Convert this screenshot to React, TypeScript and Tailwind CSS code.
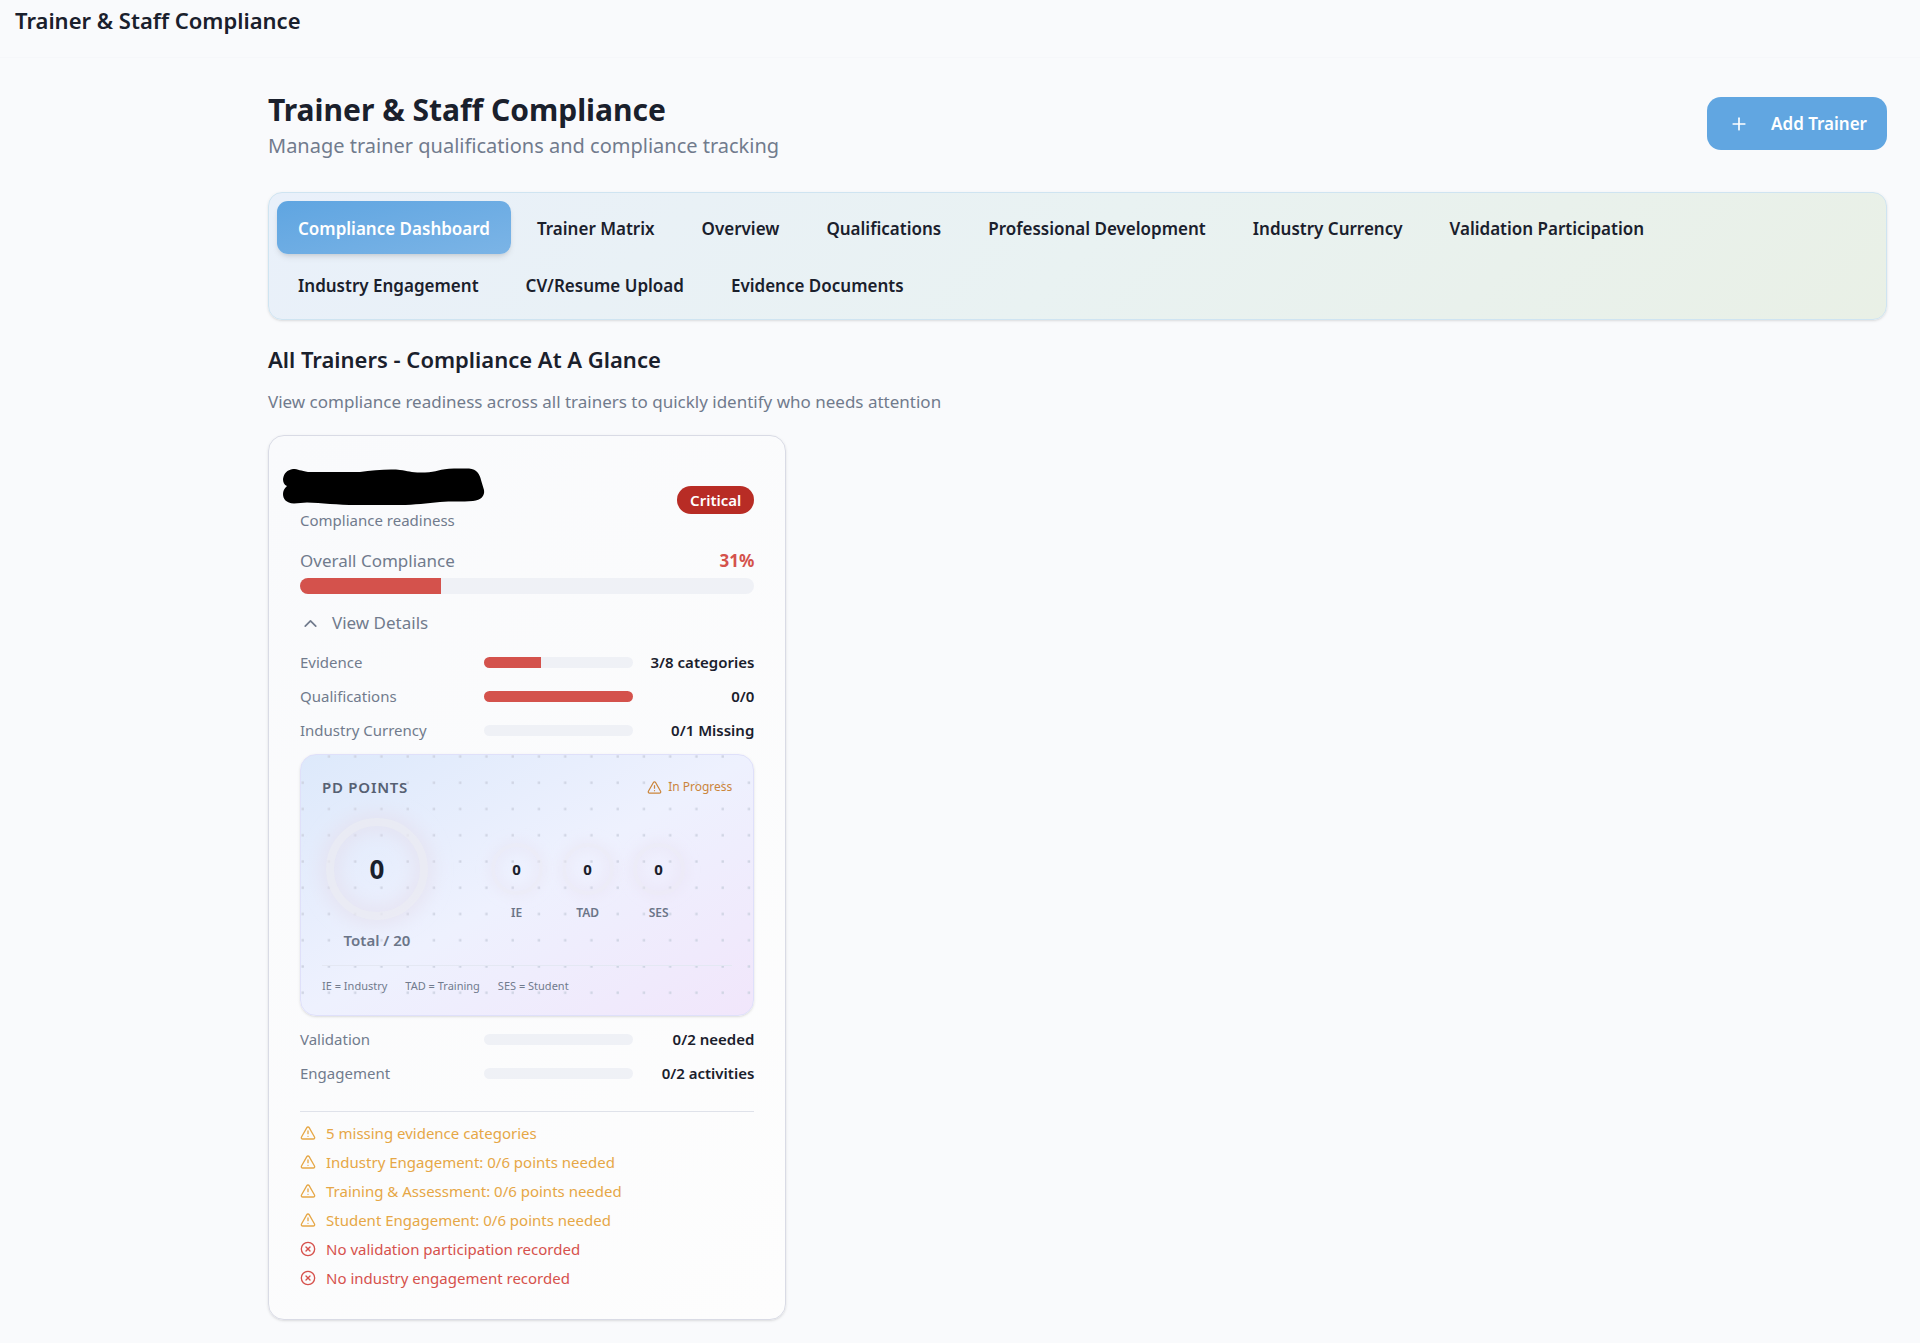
import type { ReactNode } from 'react';
import { ChevronUp, CircleX, Plus, TriangleAlert } from 'lucide-react';

const tabs = [
  'Compliance Dashboard',
  'Trainer Matrix',
  'Overview',
  'Qualifications',
  'Professional Development',
  'Industry Currency',
  'Validation Participation',
  'Industry Engagement',
  'CV/Resume Upload',
  'Evidence Documents',
];

const alerts = [
  { level: 'warning', text: '5 missing evidence categories' },
  { level: 'warning', text: 'Industry Engagement: 0/6 points needed' },
  { level: 'warning', text: 'Training & Assessment: 0/6 points needed' },
  { level: 'warning', text: 'Student Engagement: 0/6 points needed' },
  { level: 'error', text: 'No validation participation recorded' },
  { level: 'error', text: 'No industry engagement recorded' },
];

function Bar({ value, label, tall }: { value: number; label: string; tall?: boolean }) {
  return (
    <div
      role="progressbar"
      aria-label={label}
      aria-valuenow={value}
      className={`overflow-hidden rounded-full bg-[#eff1f6] ${tall ? 'h-4' : 'h-[11px]'}`}
    >
      <div className="h-full bg-[#d4524c]" style={{ width: `${value}%` }} />
    </div>
  );
}

function Metric({ label, value, result }: { label: string; value: number; result: string }) {
  return (
    <div className="grid h-[22px] grid-cols-[184fr_149fr_121fr] items-center text-[15px] leading-[22px]">
      <span className="text-[#717b8d]">{label}</span>
      <Bar value={value} label={label} />
      <span className="text-right font-semibold whitespace-nowrap text-[#1a202c]">{result}</span>
    </div>
  );
}

function Ring({ large, children }: { large?: boolean; children: ReactNode }) {
  const id = large ? 'glow-large' : 'glow-small';
  const size = large ? 110 : 60;
  const c = size / 2;
  const r = large ? 47 : 24;
  return (
    <div className="grid place-items-center">
      <svg
        width={size}
        height={size}
        className="col-start-1 row-start-1 overflow-visible"
        aria-hidden="true"
      >
        <defs>
          <filter id={id} x="-50%" y="-50%" width="200%" height="200%">
            <feGaussianBlur stdDeviation={large ? 9 : 6} />
          </filter>
        </defs>
        <circle
          cx={c}
          cy={c}
          r={r}
          fill="none"
          stroke="#e4deed"
          strokeOpacity={large ? 0.7 : 0.35}
          strokeWidth={large ? 18 : 10}
          filter={`url(#${id})`}
        />
        <circle
          cx={c}
          cy={c}
          r={r}
          fill="none"
          stroke="#eeeff4"
          strokeOpacity={large ? 0.5 : 0.35}
          strokeWidth={large ? 8 : 4}
        />
      </svg>
      <span
        className={`col-start-1 row-start-1 font-bold text-[#1a202c] ${large ? 'text-[26px]' : 'text-[15px]'}`}
      >
        {children}
      </span>
    </div>
  );
}

function PointsPanel() {
  return (
    <section className="relative mt-px overflow-hidden rounded-2xl border border-[#dfe0fa] bg-linear-to-br from-[#dde9fb] via-[#eef1fe] to-[#f1e6fb] shadow-sm">
      <svg className="absolute inset-0 h-full w-full" aria-hidden="true">
        <defs>
          <pattern id="dots" width="26.25" height="26.25" patternUnits="userSpaceOnUse">
            <rect x="0.5" y="0.3" width="2.4" height="2.4" fill="#cfd4e3" />
          </pattern>
        </defs>
        <rect width="100%" height="100%" fill="url(#dots)" />
      </svg>
      <div className="relative px-[21px] pt-[21px] pb-[21px]">
        <div className="flex items-center justify-between">
          <h4 className="text-[15px] leading-[22px] font-semibold tracking-wider text-[#566072]">PD POINTS</h4>
          <span className="flex items-center gap-[6px] text-[12px] leading-[22px] text-[#cb853b]">
            <TriangleAlert size={15} strokeWidth={2} />
            In Progress
          </span>
        </div>
        <div className="mt-4 flex items-center gap-[11px]">
          <div className="text-center">
            <Ring large>0</Ring>
            <p className="mt-[6px] text-[15px] leading-5 font-semibold text-[#6b7588]">Total / 20</p>
          </div>
          <div className="flex flex-1 justify-center gap-[11px] text-center">
            {['IE', 'TAD', 'SES'].map((name) => (
              <div key={name} className="pb-[2px]">
                <Ring>0</Ring>
                <p className="mt-1 text-[12px] leading-5 font-semibold text-[#6b7588]">{name}</p>
              </div>
            ))}
          </div>
        </div>
        <div className="mt-[15px] flex gap-[18px] border-t border-[#e4e8f3] pt-3 text-[11px] leading-4 text-[#717b8d]">
          <span>IE = Industry</span>
          <span>TAD = Training</span>
          <span>SES = Student</span>
        </div>
      </div>
    </section>
  );
}

function TrainerCard() {
  return (
    <article className="rounded-2xl border border-[#d9dbe5] bg-linear-135 from-[#f9fafc] to-[#fdfdfd] px-[31px] pt-8 pb-[30px] shadow-sm">
      <div className="flex items-center justify-between">
        <div>
          <svg
            width="202"
            height="39"
            viewBox="0 0 202 39"
            className="-ml-[17px]"
            role="img"
            aria-label="Name hidden"
          >
            <path d="M10 1C15 1 18 3 25 4H77C90 2 108 1 117 2C126 3 128 5 142 4.500C154 4 156 1 171 0.500H186C194 1 197 7 198 12L201 22C202 28 198 32 190 33C179 34 168 33 157 34C144 35 132 37 117 37H73C55 37 38 35 24 34.500L11 35.500C3 35 0 31 0 26C0 23 1 21 4 18C1 17 0 14 0 11C1 5 4 2 10 1Z" />
          </svg>
          <p className="mt-px text-[15px] leading-6 text-[#717b8d]">Compliance readiness</p>
        </div>
        <span className="rounded-full bg-[#b82c25] px-[13px] text-[15px] leading-7 font-semibold text-white">
          Critical
        </span>
      </div>

      <div className="mt-[17px] mb-[5px] flex justify-between text-[17px] leading-6">
        <span className="text-[#717b8d]">Overall Compliance</span>
        <span className="font-bold text-[#d4524c]">31%</span>
      </div>
      <Bar value={31} label="Overall Compliance" tall />

      <button type="button" className="mt-[17px] flex items-center gap-[11px] text-[17px] leading-6 text-[#717b8d]">
        <ChevronUp size={21} strokeWidth={2} />
        View Details
      </button>

      <div className="mt-4 flex flex-col gap-3">
        <Metric label="Evidence" value={38} result="3/8 categories" />
        <Metric label="Qualifications" value={100} result="0/0" />
        <Metric label="Industry Currency" value={0} result="0/1 Missing" />
        <PointsPanel />
        <Metric label="Validation" value={0} result="0/2 needed" />
        <Metric label="Engagement" value={0} result="0/2 activities" />
      </div>

      <ul className="mt-[27px] flex flex-col gap-[7px] border-t border-[#dfe2ea] pt-[10px] text-[15px] leading-[22px]">
        {alerts.map(({ level, text }) => (
          <li
            key={text}
            className={`flex items-center gap-[10px] ${level === 'error' ? 'text-[#d6514c]' : 'text-[#e6a746]'}`}
          >
            {level === 'error' ? <CircleX size={16} strokeWidth={2} /> : <TriangleAlert size={16} strokeWidth={2} />}
            {text}
          </li>
        ))}
      </ul>
    </article>
  );
}

export default function App() {
  return (
    <div className="min-h-screen bg-[#f9fafc] font-['Noto_Sans',sans-serif] text-[#1a202c]">
      <header className="h-[58px] border-b border-[#f6f7fa] px-[15px] pt-[7px]">
        <span className="text-[22px] leading-[26px] font-semibold">Trainer &amp; Staff Compliance</span>
      </header>

      <main className="pt-[34px] pr-[33px] pb-[22px] pl-[268px]">
        <div className="flex items-start justify-between">
          <div>
            <h1 className="text-[30px] leading-9 font-bold">Trainer &amp; Staff Compliance</h1>
            <p className="text-[20px] leading-9 text-[#717b8d]">Manage trainer qualifications and compliance tracking</p>
          </div>
          <button
            type="button"
            className="mt-[5px] flex h-[53px] items-center gap-[22px] rounded-[14px] bg-[#61a6e1] pt-px pr-5 pl-[22px] text-[17px] font-semibold text-white"
          >
            <Plus size={20} strokeWidth={2} />
            Add Trainer
          </button>
        </div>

        <nav className="mt-7 flex flex-wrap gap-x-[5px] gap-y-1 rounded-[14px] border border-[#cfe4f1] bg-linear-135 from-[#e9f0fa] via-[#e9f2f2] to-[#e9f0e6] p-2 shadow-sm">
          {tabs.map((tab, i) => (
            <button
              key={tab}
              type="button"
              className={`h-[53px] rounded-[11px] px-[21px] pt-0.5 text-[17px] font-semibold ${
                i === 0 ? 'bg-linear-to-br from-[#5fa5e1] to-[#7bb4e6] text-white shadow-md' : ''
              }`}
            >
              {tab}
            </button>
          ))}
        </nav>

        <h2 className="mt-[23px] text-[22px] leading-8 font-semibold">All Trainers - Compliance At A Glance</h2>
        <p className="mt-[15px] text-[17px] leading-6 text-[#717b8d]">
          View compliance readiness across all trainers to quickly identify who needs attention
        </p>

        <div className="mt-[21px] grid grid-cols-3 gap-8">
          <TrainerCard />
        </div>
      </main>
    </div>
  );
}
